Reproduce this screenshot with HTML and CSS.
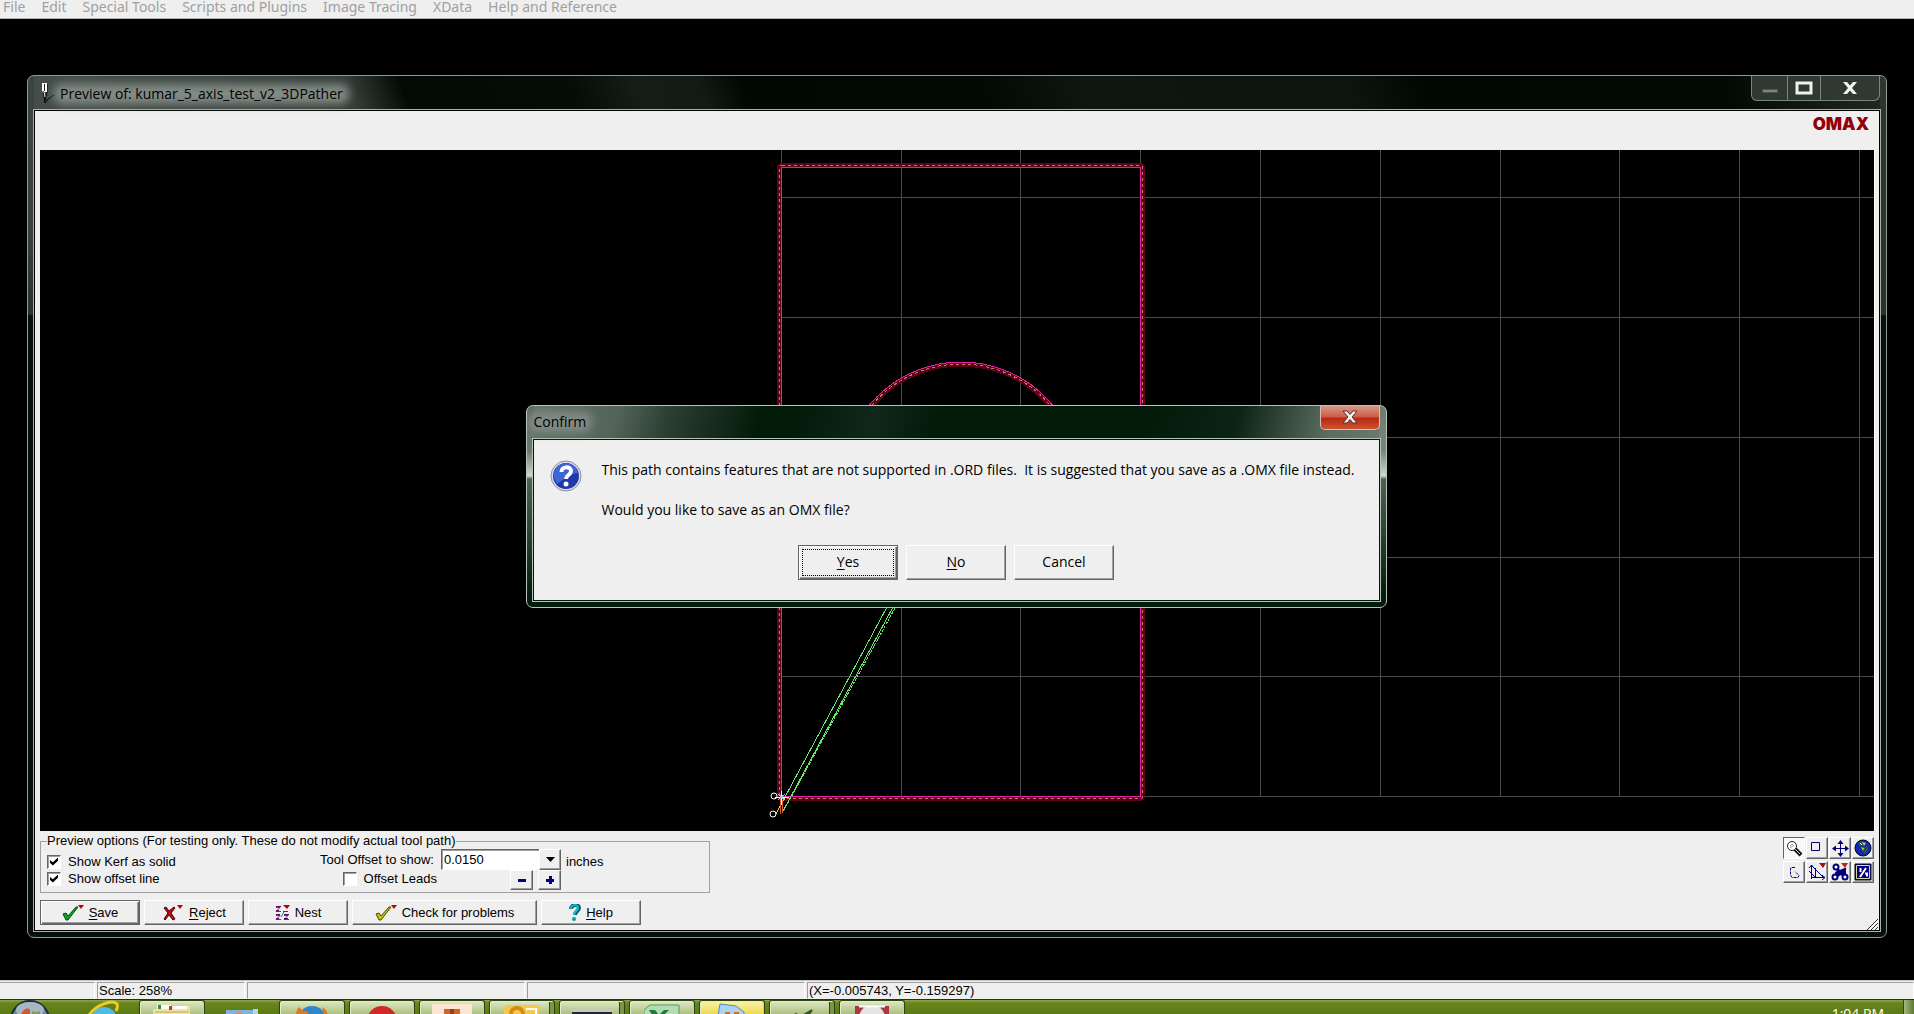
FILE: index.html
```html
<!DOCTYPE html>
<html lang="en">
<head>
<meta charset="utf-8">
<title>Preview of: kumar_5_axis_test_v2_3DPather</title>
<link rel="stylesheet" href="styles.css">
</head>
<body>
<nav class="menubar" aria-label="Application menu">
  <button type="button" disabled>File</button>
  <button type="button" disabled>Edit</button>
  <button type="button" disabled>Special Tools</button>
  <button type="button" disabled>Scripts and Plugins</button>
  <button type="button" disabled>Image Tracing</button>
  <button type="button" disabled>XData</button>
  <button type="button" disabled>Help and Reference</button>
</nav>

<main class="workspace">
  <section class="window" aria-label="Preview">
    <header class="titlebar">
      <svg class="app-icon" width="16" height="22" viewBox="0 0 16 22">
        <path d="M3 1h5v9H3z" fill="#fff"/>
        <path d="M5.500 2v7M8.500 2v8" stroke="#222" fill="none"/>
        <path d="M4 9l1 5 1 7 3-4 2-1 2-2 3-1M8 10l-2 9" stroke="#000" fill="none"/>
        <path d="M5 10l1 5" stroke="#ddd" fill="none"/>
      </svg>
      <h1 class="title glow">Preview of: kumar_5_axis_test_v2_3DPather</h1>
      <div class="caption-buttons">
        <button type="button" aria-label="Minimize" class="cap cap-min"><svg width="20" height="14"><path d="M2.500 8.500h15v3h-15z" fill="#7c857c" stroke="#4c544c"/></svg></button>
        <button type="button" aria-label="Maximize" class="cap cap-max"><svg width="20" height="14"><path d="M3 2h14v10H3z" fill="none" stroke="#eef0f0" stroke-width="3"/></svg></button>
        <button type="button" aria-label="Close" class="cap cap-close"><svg width="16" height="14"><path d="M1 1h4l3 3.500L11 1h4l-5 6 5 6h-4l-3-3.500L5 13H1l5-6z" fill="#f4f6f6"/></svg></button>
      </div>
    </header>

    <div class="client">
      <div class="brand-row"><span class="brand">OMAX</span></div>

      <svg class="canvas" role="img" aria-label="Tool path preview">
        <g class="grid-lines">
          <path d="M741.500 0V646M861.500 0V646M980.500 0V646M1100.500 0V646M1220.500 0V646M1340.500 0V646M1460.500 0V646M1579.500 0V646M1699.500 0V646M1819.500 0V646"/>
          <path d="M741 47.500H4000M741 167.500H4000M741 287.500H4000M741 407.500H4000M741 526.500H4000M741 646.500H4000"/>
        </g>
        <rect class="kerf" x="739.500" y="15.500" width="363" height="633" rx="2"/>
        <rect class="offset" x="739.500" y="15.500" width="363" height="633" rx="2"/>
        <rect class="path" x="741.500" y="17.500" width="359" height="629"/>
        <circle class="kerf" cx="921" cy="331" r="117"/>
        <circle class="offset" cx="921" cy="331" r="117"/>
        <circle class="path" cx="921" cy="331" r="119"/>
        <g class="lead">
          <path d="M847 457L745 647"/>
          <path d="M853 457L742 663"/>
          <path d="M855 458L744 660" stroke-dasharray="3 1"/>
        </g>
        <path d="M745 647L736 664" stroke="#c9d84a" fill="none"/>
        <path d="M740.500 648v16M742.500 650v13" stroke="#e0602c" fill="none"/>
        <g fill="none" stroke="#fff">
          <circle class="node" cx="734" cy="646" r="3"/>
          <circle class="node" cx="733" cy="664" r="3"/>
          <path d="M735 647h14M741.500 641v14"/>
        </g>
        <path d="M738 644l7 6M745 644l-7 6" stroke="#7fd0ff" fill="none"/>
      </svg>

      <div class="controls">
        <div class="controls-left">
          <fieldset class="options">
            <legend>Preview options (For testing only. These do not modify actual tool path)</legend>
            <div class="options-grid">
              <div class="checks">
                <label class="check"><input type="checkbox" checked>Show Kerf as solid</label>
                <label class="check"><input type="checkbox" checked>Show offset line</label>
              </div>
              <div class="offset-grid">
                <label for="tool-offset" class="offset-label">Tool Offset to show:</label>
                <div class="combo">
                  <select id="tool-offset"><option>0.0150</option></select>
                  <span class="combo-arrow"><svg width="9" height="5"><path d="M0 0h9L4.500 5z"/></svg></span>
                </div>
                <span class="unit">inches</span>
                <label class="check leads"><input type="checkbox">Offset Leads</label>
                <div class="steppers">
                  <button type="button" class="raised" aria-label="Decrease"><svg width="10" height="10"><path d="M1 4h8v3H1z" fill="#00008b"/></svg></button>
                  <button type="button" class="raised" aria-label="Increase"><svg width="10" height="10"><path d="M1 4h8v3H1zM4 1h3v8H4z" fill="#00008b"/></svg></button>
                </div>
              </div>
            </div>
          </fieldset>
          <div class="actions">
            <button type="button" class="raised action default"><svg width="22" height="16"><path d="M1 9l3-1 2 3 8-9h2L6 15H4z" fill="#0aa020" stroke="#045010"/><path d="M16 0h6l-3 4z" fill="#c00010"/></svg><span><u>S</u>ave</span></button>
            <button type="button" class="raised action"><svg width="22" height="16"><path d="M2 3l2-1 3 4 5-4 1 1-4 5 4 6-2 1-4-5-4 5-1-1 4-6z" fill="#b01018" stroke="#500"/><path d="M15 0h6l-3 4z" fill="#c00010"/></svg><span><u>R</u>eject</span></button>
            <button type="button" class="raised action"><svg width="15" height="16"><path d="M1 2.500h4L1 6.500h5M1 10.500h4l-4 4h5M9 10.500h4l-4 4h5M8 6.500h5" stroke="#90108c" fill="none"/><path d="M1 1.500h5M1 5.500h3M1 9.500h4M1 13.500h3M9 9.500h5M9 13.500h4" stroke="#50106c" fill="none"/><path d="M6 12l3-5" stroke="#0a9040"/><path d="M8 0h7l-3 4z" fill="#b00020"/></svg><span>Nest</span></button>
            <button type="button" class="raised action wide"><svg width="22" height="16"><path d="M1 9l3-1 2 3 8-9h2L6 15H4z" fill="#c8c000" stroke="#4c4a00"/><path d="M16 0h6l-3 4z" fill="#c00010"/></svg><span>Check for problems</span></button>
            <button type="button" class="raised action"><svg width="12" height="17"><path d="M2 5c0-5 8-5 8-1 0 3-4 3-4 7" fill="none" stroke="#045a64" stroke-width="4"/><path d="M2 5c0-5 7-5 7-1 0 3-4 3-4 7" fill="none" stroke="#10c0c8" stroke-width="2"/><circle cx="5" cy="15" r="2" fill="#0a9aa4"/></svg><span><u>H</u>elp</span></button>
          </div>
        </div>

        <div class="controls-right">
          <div class="tools">
            <button type="button" class="raised tool pressed" aria-label="Zoom"><svg width="18" height="18"><path d="M10 10l6 6" stroke="#111" stroke-width="4"/><path d="M10 10l5 5" stroke="#ddd"/><circle cx="7" cy="7" r="4.500" fill="#fff" stroke="#222"/><path d="M5 7l3-2M5 9l4-3" stroke="#8aa"/></svg></button>
            <button type="button" class="raised tool" aria-label="Zoom to window"><svg width="18" height="18"><path d="M3.500 3.500h8v8h-8z" fill="none" stroke="#00007e"/></svg></button>
            <button type="button" class="raised tool" aria-label="Pan"><svg width="18" height="18"><path d="M9.500 3v13M3 9.500h13" stroke="#00007e"/><path d="M9.500 1l3 4h-6zM9.500 18l3-4h-6zM1 9.500l4-3v6zM18 9.500l-4-3v6z" fill="#00007e"/></svg></button>
            <button type="button" class="raised tool" aria-label="Zoom to world"><svg width="18" height="18"><circle cx="9" cy="9" r="8" fill="#1428b4" stroke="#000020"/><path d="M4 4l4-2 1 4-3 2zM9 9l4-2 1 4-4 5z" fill="#1c5a4a"/><path d="M8 3l4 1-2 3zM7 8l3 1-1 3z" fill="#d8c840"/><path d="M6 4l2 2" stroke="#fff"/></svg></button>
            <button type="button" class="raised tool" aria-label="Zoom to path"><svg width="18" height="18"><path d="M10 4.500H6L5.500 6v6L7 14.500h6l1-2-4-4" fill="none" stroke="#00007e" stroke-dasharray="3 1"/></svg></button>
            <button type="button" class="raised tool" aria-label="Show traverses"><svg width="18" height="18"><path d="M3.500 16V2M1 5l2.500-3L6 5M3 14.500h14M14 12l3 2.500-3 2.500M4 3l11 11M1 8l7 7M7.500 5v9" fill="none" stroke="#00007e"/><path d="M11 0h7l-3 5z" fill="#a01010"/></svg></button>
            <button type="button" class="raised tool" aria-label="Show part"><svg width="18" height="18"><path d="M5 5l4 3 5-2v7l-4-2-4 2-1-3 2-2z" fill="#00007e" stroke="#00007e" stroke-width="2"/><circle cx="5" cy="4" r="2.500" fill="#fff" stroke="#00007e" stroke-width="2"/><circle cx="4" cy="14" r="2.500" fill="#fff" stroke="#00007e" stroke-width="2"/><circle cx="14" cy="14" r="2.500" fill="#fff" stroke="#00007e" stroke-width="2"/><path d="M10 0h7l-3 5z" fill="#c02010"/></svg></button>
            <button type="button" class="raised tool" aria-label="Zoom percent"><svg width="18" height="18"><path d="M1 1h16v16H1z" fill="#00007e" stroke="#111"/><path d="M2.500 2.500h13v13h-13z" fill="none" stroke="#d8d89c"/><path d="M12 5l-6 9M6.500 5v4M11 10.500h2v3" stroke="#fff" stroke-width="2" fill="none"/></svg></button>
          </div>
          <svg class="grip" width="11" height="11"><path d="M0 11L11 0M4 11l7-7M8 11l3-3" stroke="#333"/><path d="M2 11l9-9M6 11l5-5" stroke="#fff"/></svg>
        </div>
      </div>
    </div>
  </section>
</main>

<footer class="statusbar">
  <span class="panel p1"></span>
  <span class="panel p2">Scale: 258%</span>
  <span class="panel p3"></span>
  <span class="panel p3"></span>
  <span class="panel p4">(X=-0.005743, Y=-0.159297)</span>
</footer>

<div class="taskbar">
  <button type="button" class="task orb" aria-label="Start"><svg width="40" height="15"><circle cx="20" cy="20" r="19" fill="#6d8ba0" stroke="#1e2f3c" stroke-width="2"/><ellipse cx="20" cy="10" rx="14" ry="8" fill="#a3b7c4"/><path d="M11 15c3-8 8-7 9-5v5z" fill="#d8532a"/><path d="M22 11c3 1 6 2 8 0v4h-8z" fill="#8a9c58"/></svg></button>
  <button type="button" class="task plain" aria-label="Internet Explorer"><svg width="34" height="15"><circle cx="18" cy="20" r="13" fill="#4fbce8"/><circle cx="18" cy="20" r="6" fill="#cdeefa"/><path d="M3 15C10 5 26-1 31 4c1 2 0 5-1 7" fill="none" stroke="#f0cc20" stroke-width="3"/></svg></button>
  <button type="button" class="task lit" aria-label="Explorer"><svg width="40" height="15"><path d="M1 8h10l2-3h25v10H1z" fill="#f2e2a0"/><path d="M5 4h14v4H5zM21 5h14v3H21z" fill="#fff"/><path d="M6 4h3v4H6z" fill="#3a8a3c"/><path d="M17 5h3v4h-3z" fill="#c04030"/><path d="M3 11h34" stroke="#c8a850"/></svg></button>
  <button type="button" class="task plain monitor" aria-label="Control panel"><svg width="34" height="15"><path d="M1 10h27v5H1z" fill="#7fb4dc"/><path d="M28 9h5v6h-5z" fill="#b8d4e8"/><circle cx="14" cy="16" r="4" fill="#e08a50"/></svg></button>
  <button type="button" class="task lit" aria-label="Firefox"><svg width="34" height="15"><circle cx="17" cy="19" r="14" fill="#2f86c8"/><path d="M1 15c0-4 1-7 3-9l3 3 7 2-4 4zM27 6c4 2 6 6 6 9h-4z" fill="#e07a20"/></svg></button>
  <button type="button" class="task lit" aria-label="Browser"><svg width="34" height="15"><circle cx="17" cy="20" r="15" fill="#d02828"/></svg></button>
  <button type="button" class="task lit" aria-label="Design tool"><svg width="40" height="15"><path d="M0 3h40v12H0z" fill="#fbe6d4"/><path d="M12 8h16v7H12z" fill="#d0642c"/><path d="M18 8h4v5h-4z" fill="#9c3c14"/></svg></button>
  <button type="button" class="task lit stack" aria-label="Outlook"><svg width="36" height="15"><path d="M3 4h32v11H0V8z" fill="#f4c84c"/><circle cx="13" cy="13" r="6" fill="none" stroke="#d88a10" stroke-width="4"/><path d="M22 8h10v6" stroke="#fff" fill="none" stroke-width="2"/></svg></button>
  <button type="button" class="task lit stack" aria-label="Console"><svg width="40" height="15"><path d="M0 9h40v6H0z" fill="#24242c"/><path d="M0 9.500h40" stroke="#c4c8d0" stroke-width="3"/></svg></button>
  <button type="button" class="task lit" aria-label="Excel"><svg width="36" height="15"><path d="M6 4h29v11H0V9z" fill="#b4dcb4" stroke="#5a9a60"/><path d="M5 9h6l4 5 5-5h5l-6 6H9z" fill="#1f7a3c"/></svg></button>
  <button type="button" class="task lit active" aria-label="Documents"><svg width="36" height="15"><path d="M4 15L6 3l16 2 8 6v4z" fill="#a8d4f0" stroke="#4c8cc0"/><path d="M11 11h5v4h-5zM20 11h5v4h-5z" fill="#d86c28"/></svg></button>
  <button type="button" class="task lit stack" aria-label="Editor"><svg width="36" height="15"><path d="M8 15l4-2 4 2M18 15l10-6-4 6" stroke="#3c5420" stroke-width="2" fill="none"/></svg></button>
  <button type="button" class="task lit" aria-label="Media"><svg width="34" height="15"><path d="M0 5h34v10H0z" fill="#a83844"/><circle cx="17" cy="17" r="13" fill="#e4e4e4"/><path d="M4 5.500h26" stroke="#fff" stroke-width="2"/></svg></button>
  <span class="clock">1:04 PM</span>
  <button type="button" class="show-desktop" aria-label="Show desktop"></button>
</div>

<div class="modal-layer">
  <section class="dialog" role="dialog" aria-labelledby="dlg-title">
    <header class="dialog-bar">
      <h2 id="dlg-title" class="glow">Confirm</h2>
      <button type="button" class="dialog-close" aria-label="Close"><svg width="16" height="14"><path d="M1 1h4l3 3.500L11 1h4l-5 6 5 6h-4l-3-3.500L5 13H1l5-6z" fill="#f6f6f6" stroke="#5c2c28"/></svg></button>
    </header>
    <div class="dialog-body">
      <div class="message">
        <svg class="question" width="32" height="32" viewBox="0 0 32 32">
          <circle cx="16" cy="16" r="15" fill="#d8dcea" stroke="#8a8fa4"/>
          <circle cx="16" cy="16" r="13" fill="#2038a8"/>
          <path d="M4 18a12 12 0 0 1 24-5c-8 0-16 8-21 11z" fill="#3f66d4"/>
          <path d="M11.500 12c0-6 9.500-6 9.500-1 0 4-5 4-5 8" fill="none" stroke="#fff" stroke-width="4"/>
          <circle cx="16" cy="24" r="2.500" fill="#fff"/>
        </svg>
        <div class="message-text">
          <p>This path contains features that are not supported in .ORD files.&nbsp; It is suggested that you save as a .OMX file instead.</p>
          <p>Would you like to save as an OMX file?</p>
        </div>
      </div>
      <div class="dialog-actions">
        <button type="button" class="raised default focused"><span><u>Y</u>es</span></button>
        <button type="button" class="raised"><span><u>N</u>o</span></button>
        <button type="button" class="raised"><span>Cancel</span></button>
      </div>
    </div>
  </section>
</div>
</body>
</html>
```
FILE: styles.css
```css
:root {
  --face: #efefef;
  --shade: #a0a0a0;
  --dark: #646464;
  --ui: "Open Sans", "Noto Sans", sans-serif;
  --classic: "Liberation Sans", Arial, sans-serif;
}

* { box-sizing: border-box; }

body {
  margin: 0;
  height: 100vh;
  display: flex;
  flex-direction: column;
  overflow: hidden;
  background: #000;
  color: #000;
  font: 13px/16px var(--classic);
}

h1, h2, p { margin: 0; font-weight: normal; }
button, select { font: inherit; color: inherit; }
button { padding: 0; border: 0; background: none; }
button svg { display: block; flex: none; }
u { text-underline-offset: 2px; }

/* Menu */
.menubar {
  flex: none;
  display: flex;
  gap: 16px;
  height: 19px;
  padding-left: 3px;
  background: var(--face);
  border-bottom: 1px solid #b4b4b4;
  font: 14px/14px "Noto Sans", sans-serif;
}
.menubar button { height: 14px; color: #a0a0a0; white-space: nowrap; }

/* Main window */
.workspace {
  flex: 1;
  min-height: 0;
  display: flex;
  padding: 56px 27px 42px 27px;
}
.window {
  flex: 1;
  min-width: 0;
  display: flex;
  flex-direction: column;
  overflow: hidden;
  padding: 0 5px 5px 5px;
  border: 1px solid #8f9a92;
  border-radius: 7px;
  background:
    linear-gradient(#3c443f, #3a423d 150px, #2a322c 238px, transparent 240px) left / 6px 100% no-repeat,
    linear-gradient(#2d352f, #2a322c 238px, transparent 240px) right / 6px 100% no-repeat,
    linear-gradient(70deg, #464e49 0, #343c37 310px, #020a03 360px, #050d06 520px, #151d17 580px, #121a14 640px, #010801 680px, #020902 900px, #0e1610 1000px, #0c140e 1250px, #010801 1320px, #020902 1600px, #2b332d 1800px) top / 100% 34px no-repeat,
    #07100a;
}
.titlebar {
  flex: none;
  display: flex;
  height: 33px;
  padding-left: 6px;
}
.app-icon { margin-top: 6px; }
.title {
  margin: 8px 0 0 5px;
  height: 20px;
  font: 14px/20px var(--ui);
  white-space: nowrap;
}
.glow { position: relative; z-index: 0; }
.glow::before {
  content: "";
  position: absolute;
  inset: 0 -6px;
  z-index: -1;
  border-radius: 8px;
  background: #828c86;
  filter: blur(5px);
}
.caption-buttons {
  display: flex;
  height: 25px;
  margin: 0 1px 0 auto;
  border: 1px solid #7b857e;
  border-top: 0;
  border-radius: 0 0 6px 6px;
  background: #303832;
}
.cap {
  display: grid;
  place-items: center;
  width: 36px;
  border-right: 1px solid #7b857e;
}
.cap-max { width: 33px; }
.cap-close { width: 58px; border: 0; }

.client {
  flex: 1;
  min-height: 0;
  display: flex;
  flex-direction: column;
  padding: 0 4px 0 5px;
  border: 1px solid #000;
  outline: 1px solid #a8b0aa;
  margin: 1px;
  background: var(--face);
}
.brand-row {
  flex: none;
  height: 39px;
  display: flex;
  justify-content: flex-end;
  padding: 4px 6px 0 0;
}
.brand { font: 900 17px/19px Inter, sans-serif; color: #940008; }
.canvas {
  flex: 1;
  display: block;
  width: 100%;
  min-height: 0;
  background: #000;
  border-right: 1px solid #fff;
  shape-rendering: crispEdges;
}
.grid-lines { stroke: #4a4a4a; fill: none; }
.kerf { fill: none; stroke: #5e0414; stroke-width: 5; }
.offset { fill: none; stroke: #c07a74; stroke-dasharray: 3 3; }
.path { fill: none; stroke: #e81ea0; }
.lead path { fill: none; stroke: #6be86b; }
.node { shape-rendering: geometricPrecision; }

/* Option panel under the canvas */
.controls {
  flex: none;
  display: flex;
  justify-content: space-between;
}
.controls-left { padding: 2px 0 5px; }
.options {
  width: 670px;
  height: 60px;
  margin: 0;
  padding: 0 6px;
  border: 1px solid var(--shade);
}
.options legend { padding: 0; height: 16px; white-space: nowrap; }
.options-grid { display: flex; }
.checks { width: 273px; padding-top: 4px; }
.check { display: flex; align-items: center; gap: 7px; height: 17px; }
.check input {
  appearance: none;
  display: grid;
  place-items: center;
  width: 14px;
  height: 14px;
  margin: 0;
  border: 1px solid;
  border-color: var(--dark) #fff #fff var(--dark);
  box-shadow: inset 1px 1px var(--shade);
  background: #fff;
}
.check input:checked::before {
  content: "";
  width: 8px;
  height: 8px;
  background: #000;
  clip-path: polygon(0 30%, 35% 60%, 100% 0, 100% 40%, 35% 100%, 0 65%);
}
.offset-grid {
  display: grid;
  grid-template-columns: 121px 120px auto;
  grid-template-rows: 21px 20px;
}
.offset-label { padding-top: 3px; line-height: 16px; }
.combo { display: grid; }
.combo > * { grid-area: 1 / 1; }
.combo select {
  appearance: none;
  height: 21px;
  padding: 0 0 0 2px;
  border: 1px solid;
  border-color: var(--dark) #fff #fff var(--dark);
  border-radius: 0;
  box-shadow: inset 1px 1px var(--shade);
  background: #fff;
}
.combo-arrow {
  justify-self: end;
  width: 22px;
  height: 21px;
  pointer-events: none;
}
.unit { padding: 5px 0 0 5px; }
.leads { justify-self: end; padding-right: 4px; }
.steppers { justify-self: end; display: flex; gap: 5px; }
.steppers button { width: 23px; height: 20px; }

.raised, .combo-arrow {
  display: grid;
  place-items: center;
  background: var(--face);
  border: 1px solid;
  border-color: #fff var(--dark) var(--dark) #fff;
  box-shadow: inset -1px -1px var(--shade);
}
.default {
  border-color: var(--dark);
  box-shadow: inset 1px 1px #fff, inset -1px -1px var(--dark), inset -2px -2px var(--shade);
}
.actions { display: flex; gap: 4px; padding-top: 7px; }
.action {
  display: flex;
  align-items: center;
  justify-content: center;
  gap: 5px;
  width: 100px;
  height: 25px;
}
.action.wide { width: 185px; }

.controls-right {
  display: flex;
  flex-direction: column;
  align-items: flex-end;
  justify-content: space-between;
}
.tools {
  display: grid;
  grid-template-columns: repeat(4, 22px);
  gap: 2px 1px;
  padding: 6px 1px 0 0;
}
.tool { width: 22px; height: 22px; }
.pressed {
  border-color: var(--dark) #fff #fff var(--dark);
  box-shadow: none;
  background: #f8f8f8;
}
.grip { margin-right: -3px; }

/* Status bar */
.statusbar {
  flex: none;
  display: flex;
  gap: 2px;
  height: 19px;
  padding-top: 2px;
  background: var(--face);
  box-shadow: inset 0 1px #c8c8c8;
}
.panel {
  padding-left: 1px;
  border: 1px solid;
  border-color: var(--shade) #fff transparent var(--shade);
  white-space: nowrap;
}
.p1 { width: 95px; border-left: 0; }
.p2 { width: 148px; }
.p3 { width: 278px; }
.p4 { flex: 1; }

/* Taskbar, only its upper edge is on screen */
.taskbar {
  flex: none;
  display: flex;
  height: 15px;
  overflow: hidden;
  border-top: 1px solid #22360a;
  background: linear-gradient(#8ea84c, #68851c 3px, #5c7a14);
}
.task {
  flex: none;
  display: flex;
  justify-content: center;
  width: 66px;
  height: 15px;
  margin-right: 4px;
  overflow: hidden;
}
.orb { width: 60px; margin: 0 10px 0 0; }
.plain { margin-right: 3px; }
.monitor { margin-right: 4px; }
.lit {
  border: 1px solid #2e4410;
  border-bottom: 0;
  border-radius: 3px 3px 0 0;
  background: linear-gradient(#dfe8c4, #a9bd7c);
  box-shadow: inset 1px 1px #e4ecd0, inset -1px 0 #c4d2a0;
}
.stack { box-shadow: inset 1px 1px #e4ecd0, inset -4px 0 #7c9448, inset -5px 0 #2e4410; }
.active { background: linear-gradient(#faf3a8, #ecd84c); }
.clock {
  margin: 6px 19px 0 auto;
  color: #fff;
  font: 14px/16px var(--ui);
}
.show-desktop { width: 11px; border-left: 1px solid #33470c; background: linear-gradient(to right, #a4b880, #5c7a2c); }

/* Confirm dialog */
.modal-layer {
  position: fixed;
  inset: 0;
  display: grid;
  place-items: center;
  padding: 0 2px 2px 0;
}
.dialog {
  width: 861px;
  max-width: 100%;
  overflow: hidden;
  padding: 0 6px 6px;
  border: 1px solid #b4c4b8;
  border-radius: 7px;
  background:
    linear-gradient(#58685e, #6c7a70 45px, #d0d8d2 70px, #506056 73px, transparent 190px) left / 7px 100% no-repeat,
    linear-gradient(#6c7a70, #78867c 45px, #d0d8d2 70px, #506056 73px, transparent 190px) right / 7px 100% no-repeat,
    linear-gradient(105deg, #64746a 0, #53635a 90px, #2c3e32 140px, #021a08 230px, #021a08 260px, #10281a 340px, #021a08 400px, #021a08 600px, #0c2414 690px, #5c6c62 780px, #6c7a70 100%) top / 100% 34px no-repeat,
    #041c0c;
  font: 14px/20px var(--ui);
}
.dialog-bar { display: flex; justify-content: space-between; height: 33px; }
.dialog-bar h2 { margin: 6px 0 0 1px; height: 20px; font: inherit; }
.dialog-close {
  display: grid;
  place-items: center;
  width: 60px;
  height: 24px;
  border: 1px solid #d8c0b8;
  border-top: 0;
  border-radius: 0 0 5px 5px;
  background: linear-gradient(#d89888, #cc5c48 48%, #b82810 52%, #cc5434);
}
.dialog-body {
  padding: 20px 16px;
  border: 1px solid #03160a;
  outline: 1px solid #b4c4b8;
  background: var(--face);
}
.message { display: flex; gap: 20px; }
.question { flex: none; }
.message-text p { margin-bottom: 20px; white-space: nowrap; }
.dialog-actions { display: flex; justify-content: center; gap: 8px; padding-top: 5px; }
.dialog-actions button { width: 100px; height: 35px; }
.focused { outline: 1px dotted #000; outline-offset: -5px; }
```
